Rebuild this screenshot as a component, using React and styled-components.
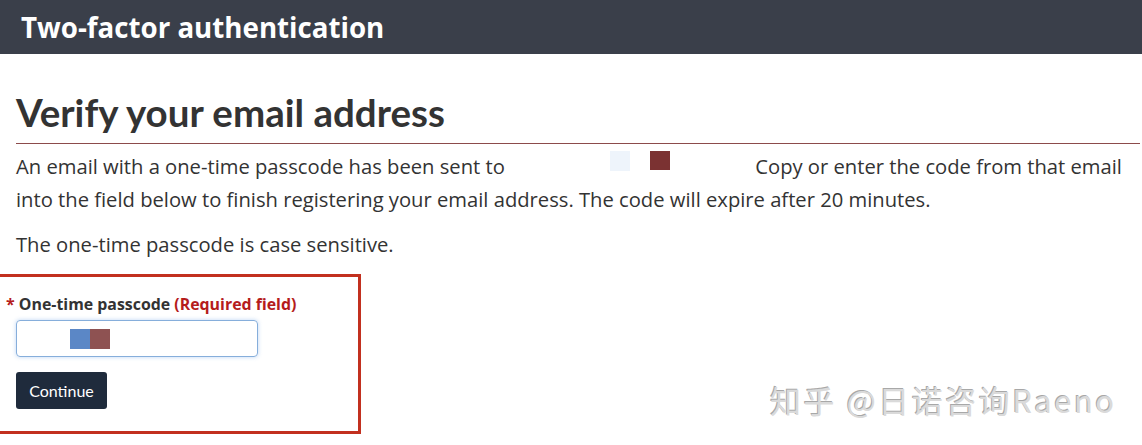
import React from "react";
import styled, { createGlobalStyle } from "styled-components";

const GlobalStyle = createGlobalStyle`
  html, body {
    margin: 0;
    padding: 0;
    background: #fff;
    font-family: "Open Sans", "Noto Sans", sans-serif;
    color: #333;
  }
`;

const Page = styled.div`
  position: relative;
  width: 1142px;
  height: 445px;
  overflow: hidden;
`;

const Header = styled.header`
  height: 54px;
  background: #3a3f4a;
  display: flex;
  align-items: center;
  padding-left: 21px;
  h2 {
    margin: 0;
    color: #fff;
    font-size: 27.7px;
    font-weight: 700;
  }
`;

const Main = styled.main`
  padding: 0 2px 0 16px;
`;

const Title = styled.h1`
  margin: 34px 0 0;
  padding-bottom: 7px;
  font-family: Lato, "Open Sans", sans-serif;
  font-size: 38.5px;
  font-weight: 700;
  line-height: 48px;
  color: #333;
  border-bottom: 1px solid #8c4b4b;
`;

const Text = styled.p`
  margin: ${(p) => p.$top || 8}px 0 0;
  font-size: 20.2px;
  line-height: 33px;
  color: #333;
  max-width: 1116px;
`;

const Redacted = styled.span`
  display: inline-flex;
  gap: 20px;
  width: 140px;
  padding-left: 100px;
  vertical-align: 3px;
`;

const Block = styled.span`
  display: block;
  width: 20px;
  height: ${(p) => p.$h || 20}px;
  background: ${(p) => p.$color};
`;

const ErrorBox = styled.div`
  margin: 13px 0 0 -19px;
  width: 364px;
  height: 160px;
  border: 3px solid #c2301f;
  padding: 17px 0 0 16px;
  box-sizing: border-box;
`;

const Label = styled.label`
  display: block;
  margin-left: -10px;
  font-size: 15.9px;
  font-weight: 700;
  color: #333;
  line-height: 20px;
  span {
    color: #b51c1c;
  }
`;

const Field = styled.div`
  margin-top: 6px;
  width: 242px;
  height: 37px;
  box-sizing: border-box;
  border: 1px solid #86aedb;
  border-radius: 4px;
  box-shadow: 0 0 4px rgba(110, 165, 230, 0.45);
  display: flex;
  align-items: center;
  padding-left: 53px;
`;

const Button = styled.button`
  display: block;
  margin-top: 15px;
  width: 91px;
  height: 37px;
  background: #1f2b3c;
  color: #fff;
  border: none;
  border-radius: 3px;
  font-family: Lato, "Open Sans", sans-serif;
  font-size: 16px;
  padding: 0;
`;

const Watermark = styled.div`
  position: absolute;
  left: 770px;
  top: 377px;
  font-family: "Noto Sans CJK SC", "Liberation Sans", sans-serif;
  font-size: 31px;
  color: #dadada;
  text-shadow: -1px -1px 0 #a8a8a8;
  letter-spacing: 2.5px;
  white-space: nowrap;
`;

export default function App() {
  return (
    <Page>
      <GlobalStyle />
      <Header>
        <h2>Two-factor authentication</h2>
      </Header>
      <Main>
        <Title>Verify your email address</Title>
        <Text $top={6}>
          An email with a one-time passcode has been sent to{" "}
          <Redacted>
            <Block $color="#eef4fb" />
            <Block $color="#7b3232" $h={19} />
          </Redacted>{" "}
          Copy or enter the code from that email into the field below to finish registering your email address. The code will expire after 20 minutes.
        </Text>
        <Text $top={12}>The one-time passcode is case sensitive.</Text>
        <ErrorBox>
          <Label>
            <span>*</span> One-time passcode <span>(Required field)</span>
          </Label>
          <Field>
            <Block $color="#5b87c6" />
            <Block $color="#8e5252" />
          </Field>
          <Button>Continue</Button>
        </ErrorBox>
      </Main>
      <Watermark>知乎 @日诺咨询Raeno</Watermark>
    </Page>
  );
}
